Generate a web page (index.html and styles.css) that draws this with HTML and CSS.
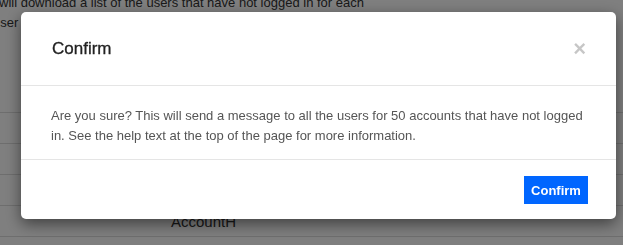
FILE: index.html
```html
<!DOCTYPE html>
<html>
<head>
  <meta name="viewport" content="width=device-width, initial-scale=1">
  <title>Inactive users</title>
  <link rel="stylesheet" href="styles.css">
</head>
<body>
  <div class="page">
    <div class="help">
      <span class="help-line">will download a list of the users that have not logged in for each</span>
      <span class="help-line wrap">user</span>
    </div>
    <div class="accounts">
      <div class="row"><span class="cell">AccountE</span></div>
      <div class="row"><span class="cell">AccountF</span></div>
      <div class="row"><span class="cell">AccountG</span></div>
      <div class="row"><span class="cell">AccountH</span></div>
    </div>
  </div>

  <div class="backdrop"></div>

  <div class="modal">
    <div class="modal-header">
      <h4 class="modal-title">Confirm</h4>
      <button class="close" type="button">&times;</button>
    </div>
    <div class="modal-body">
      Are you sure? This will send a message to all the users for 50 accounts that have not logged in. See the help text at the top of the page for more information.
    </div>
    <div class="modal-footer">
      <button class="btn-confirm" type="button">Confirm</button>
    </div>
  </div>
</body>
</html>
```

FILE: styles.css
```css
body {
  font-family: "Liberation Sans", Arial, sans-serif;
  margin: 0;
  background: #fff;
  color: #333;
  overflow: hidden;
}
.help {
  margin-top: -7px;
  font-size: 13px;
  line-height: 20px;
  color: #333;
}
.help-line {
  display: block;
  margin-left: -1px;
  white-space: nowrap;
}
.help-line.wrap {
  margin-left: -7px;
}
.accounts {
  margin-top: 79px;
  font-size: 15px;
}
.row {
  display: flex;
  align-items: center;
  height: 30px;
  border-top: 1px solid #ddd;
}
.row:last-child {
  border-bottom: 1px solid #ddd;
}
.cell {
  padding-left: 171px;
}
.backdrop {
  position: fixed;
  inset: 0;
  background: rgba(0,0,0,0.5);
}
.modal {
  position: fixed;
  top: 12px;
  left: 21px;
  width: 595px;
  background: #fff;
  border-radius: 5px;
  box-shadow: 0 5px 15px rgba(0,0,0,0.5);
}
.modal-header {
  display: flex;
  align-items: center;
  justify-content: space-between;
  height: 73px;
  padding: 0 30px 0 31px;
  border-bottom: 1px solid #e5e5e5;
}
.modal-title {
  margin: 0;
  font-size: 17px;
  font-weight: normal;
  color: #222;
  -webkit-text-stroke: 0.3px #222;
}
.close {
  border: none;
  background: none;
  padding: 0;
  font-family: "Liberation Sans", Arial, sans-serif;
  font-size: 22px;
  font-weight: bold;
  line-height: 1;
  color: #000;
  opacity: 0.22;
  cursor: pointer;
}
.modal-body {
  padding: 20px 32px 14px 30px;
  font-size: 13px;
  line-height: 19.5px;
  color: #555;
  border-bottom: 1px solid #e5e5e5;
}
.modal-footer {
  display: flex;
  justify-content: flex-end;
  padding: 16px 28px 15px;
}
.btn-confirm {
  height: 28px;
  width: 64px;
  padding: 0;
  border: none;
  background: #0066ff;
  color: #fff;
  font-family: "Liberation Sans", Arial, sans-serif;
  font-size: 13px;
  font-weight: bold;
  cursor: pointer;
}
```
